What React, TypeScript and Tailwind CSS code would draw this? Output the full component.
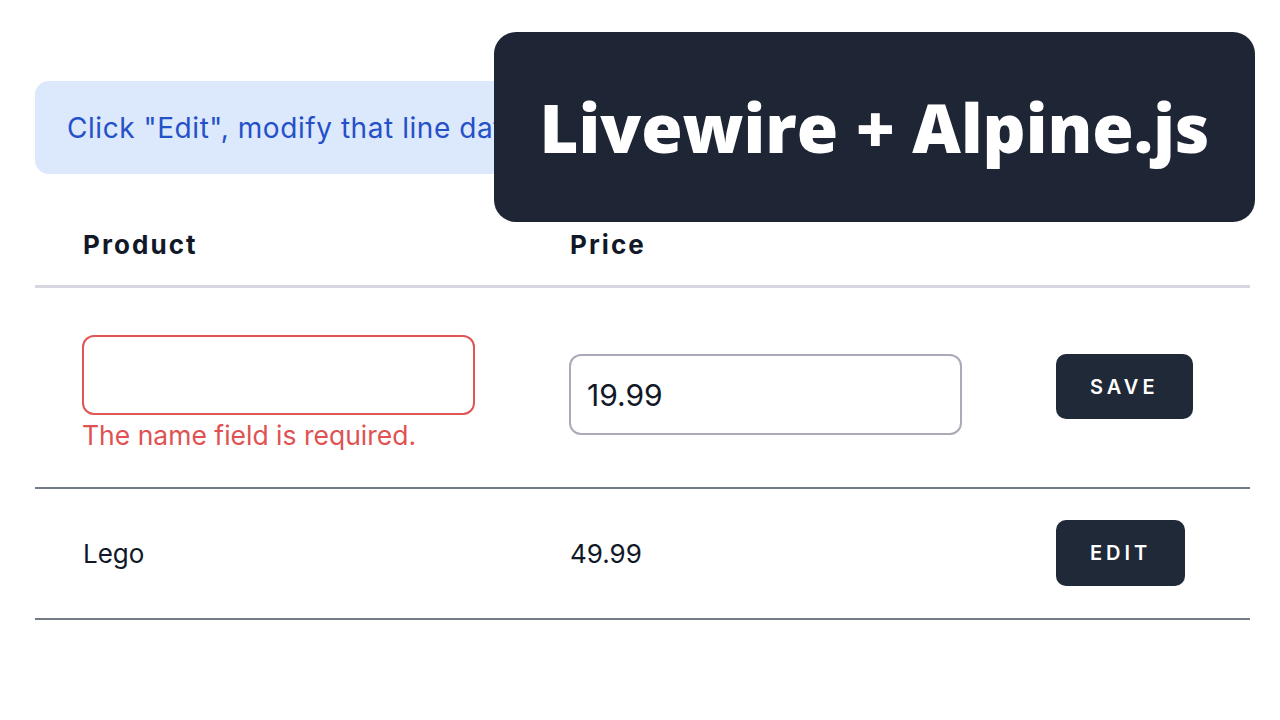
export default function App() {
  return (
    <div className="relative w-[1280px] h-[720px] overflow-hidden bg-white font-['Inter',sans-serif] text-[#111827]">
      <div className="pl-[35px] pr-[30px] pt-[81px]">
        {/* notice sits partly under the title card */}
        <div className="flex h-[93px] items-center overflow-hidden whitespace-nowrap rounded-[14px] bg-[#dce8fc] px-[32px] text-[28px] tracking-[0.02em] text-[#2450c8]">
          Click "Edit", modify that line data and click "Save".
        </div>

        <div className="mt-[31px] grid grid-cols-[487px_487px_1fr] border-b-[3px] border-[#d5d6e0] py-[24px] text-[26px] font-bold leading-[32px] tracking-[0.08em]">
          <div className="px-[48px]">Product</div>
          <div className="px-[48px]">Price</div>
          <div />
        </div>

        <div className="grid h-[201px] grid-cols-[487px_487px_1fr] items-start border-b-2 border-[#737b85]">
          <div className="pl-[47px] pr-[47px] pt-[47px]">
            <input
              className="block h-[80px] w-[393px] rounded-[12px] border-2 border-[#e05656] px-[16px] text-[30px] outline-none"
              defaultValue=""
            />
            <div className="mt-[4px] text-[26.5px] leading-[32px] text-[#e05252]">
              The name field is required.
            </div>
          </div>
          <div className="pl-[47px] pt-[66px]">
            <input
              className="block h-[81px] w-[393px] rounded-[12px] border-2 border-[#a9abb8] px-[16px] text-[30px] text-[#111827] outline-none"
              defaultValue="19.99"
            />
          </div>
          <div className="pl-[47px] pt-[66px]">
            <button className="flex h-[65px] items-center rounded-[10px] bg-[#1f2937] pl-[34px] pr-[34px] text-[20px] font-semibold tracking-[0.2em] text-white">
              SAVE
            </button>
          </div>
        </div>

        <div className="grid h-[131px] grid-cols-[487px_487px_1fr] items-center border-b-2 border-[#737b85] text-[26px] leading-[32px]">
          <div className="px-[48px]">Lego</div>
          <div className="px-[48px]">49.99</div>
          <div className="pl-[47px]">
            <button className="-mt-[2px] flex h-[66px] items-center rounded-[10px] bg-[#1f2937] pl-[34px] pr-[34px] text-[20px] font-semibold tracking-[0.2em] text-white">
              EDIT
            </button>
          </div>
        </div>
      </div>

      <div className="absolute left-[494px] top-[32px] flex h-[190px] w-[761px] items-center justify-center rounded-[22px] bg-[#1e2636]">
        <span className="font-['Open_Sans',sans-serif] text-[67px] font-extrabold leading-none text-white">
          Livewire + Alpine.js
        </span>
      </div>
    </div>
  );
}
